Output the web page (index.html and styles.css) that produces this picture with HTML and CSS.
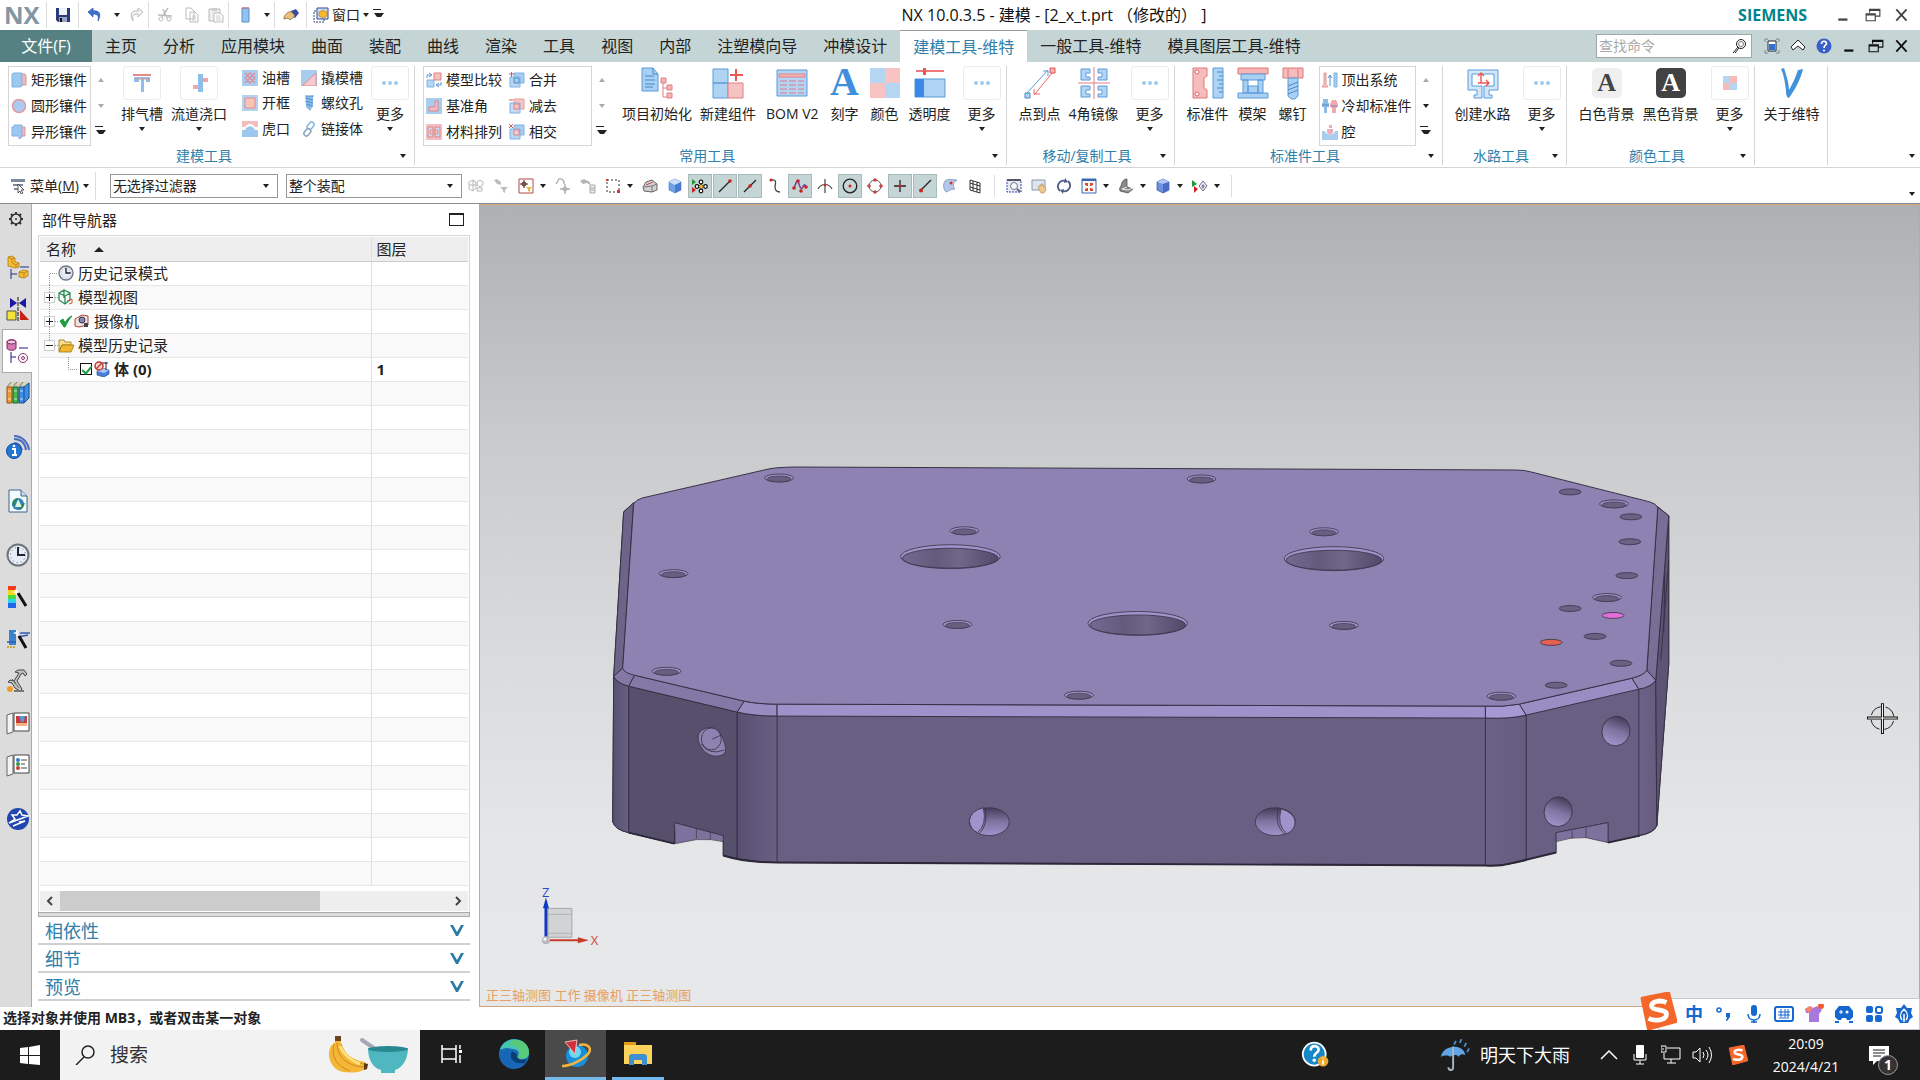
FILE: index.html
```
<!DOCTYPE html>
<html lang="zh-CN">
<head>
	<title>NX 10.0.3.5 - 建模</title>
	<meta charset="UTF-8">
	<link rel="stylesheet" href="styles.css">
</head>
<body>
	<svg class="sprite">
		<symbol id="i-save" viewBox="0 0 16 16"><path d="M1 1h14v14H3l-2-2z" fill="#2b3a78"/><path d="M4 1h8v7H4z" fill="#eef1fb"/><path d="M4 10h8v5H4z" fill="#9aa4c8"/><path d="M5 11h2v4H5z" fill="#111"/></symbol>
		<symbol id="i-undo" viewBox="0 0 16 16"><path d="M1 5l5-4v3c6-1 9 3 5 10 1-5 0-7-5-7v3z" fill="#3f74cf" stroke="#2753a5" stroke-width=".7"/></symbol>
		<symbol id="i-redo" viewBox="0 0 16 16"><path d="M15 5l-5-4v3c-6-1-9 3-5 10-1-5 0-7 5-7v3z" fill="#f2f2f2" stroke="#bbb"/></symbol>
		<symbol id="i-cut" viewBox="0 0 16 16"><path d="M5 10l6-9M10 11L6 2M1 8l14 1" fill="none" stroke="#bcbcbc" stroke-width="1.4"/><circle cx="4" cy="12" r="2" fill="none" stroke="#bcbcbc"/><circle cx="12" cy="12" r="2" fill="none" stroke="#bcbcbc"/></symbol>
		<symbol id="i-copy" viewBox="0 0 16 16"><path d="M2 1h5l3 3v8H2zM6 5h5l3 3v7H6z" fill="#fff" stroke="#bbb"/><path d="M8 9h4M8 11h4M8 13h4" stroke="#ccc"/></symbol>
		<symbol id="i-paste" viewBox="0 0 16 16"><path d="M1 2h11v12H1z" fill="#eee" stroke="#bbb"/><path d="M4 1h5v3H4z" fill="#ccc"/><path d="M6 6h6l3 3v6H6z" fill="#fff" stroke="#bbb"/><path d="M8 9h4M8 11h5M8 13h5" stroke="#ccc"/></symbol>
		<symbol id="i-rect" viewBox="0 0 16 16"><path d="M5 1h7v14H5z" fill="#8cc4f5" stroke="#5c8dbd"/><path d="M5 1h7" stroke="#d66"/></symbol>
		<symbol id="i-hand" viewBox="0 0 16 16"><path d="M8 4l5-2 3 4-4 5-4-2z" fill="#3b4aa5"/><path d="M1 10c2-4 5-6 8-5l3 4-5 4-2-2-4 1z" fill="#e9bf7c" stroke="#7a5a2c" stroke-width=".7"/></symbol>
		<symbol id="i-window" viewBox="0 0 16 16"><path d="M1 4h10v11H1z" fill="#fff" stroke="#334a8d" stroke-dasharray="2 1"/><path d="M4 1h11v11H4z" fill="#cfe0fa" stroke="#334a8d"/><path d="M6 5l4-2 4 2v4l-4 2-4-2z" fill="#f7b92d" stroke="#b17a10" stroke-width=".6"/></symbol>
		<symbol id="i-min" viewBox="0 0 14 14"><path d="M2 11h8" stroke="currentColor" stroke-width="2"/></symbol>
		<symbol id="i-restore" viewBox="0 0 14 14"><path d="M1 6h8v6H1zM4 5V2h9v6H9M1 7h8M4 3h9" fill="none" stroke="currentColor" stroke-width="1"/></symbol>
		<symbol id="i-close" viewBox="0 0 14 14"><path d="M2 2l9 10M11 2L2 12" stroke="currentColor" stroke-width="1.600"/></symbol>
		<symbol id="i-find" viewBox="0 0 16 16"><circle cx="10" cy="6" r="4.5" fill="none" stroke="#222"/><circle cx="10" cy="6" r="2.5" fill="none" stroke="#777"/><path d="M7 9l-5 6M8 10l-4 5" stroke="#222"/></symbol>
		<symbol id="i-full" viewBox="0 0 16 16"><path d="M1 4V1h3M12 1h3v3M15 12v3h-3M4 15H1v-3" fill="none" stroke="#789"/><path d="M4 3h8v10H4z" fill="#fff" stroke="#223"/><path d="M5 6h6v6H5z" fill="#2f6fd0"/></symbol>
		<symbol id="i-up2" viewBox="0 0 16 16"><path d="M1 9l7-7 7 7-2 3-5-4-5 4z" fill="#fff" stroke="#222"/></symbol>
		<symbol id="i-help" viewBox="0 0 16 16"><circle cx="8" cy="8" r="7.5" fill="#3a5fc8"/><path d="M5.5 6c0-4 5-3 5-.5C10.500 7.500 8 7 8 10" fill="none" stroke="#fff" stroke-width="1.6"/><circle cx="8" cy="12.400" r="1" fill="#fff"/></symbol>

		<!-- ribbon, small -->
		<symbol id="r-box" viewBox="0 0 16 16"><path d="M10 2h4l1 2v9h-5z" fill="#f5b9b9" stroke="#e39090"/><path d="M1 2l2-1h8v13l-2 1H1z" fill="#9cc8f0" stroke="#7eb3e4"/></symbol>
		<symbol id="r-round" viewBox="0 0 16 16"><circle cx="8" cy="8" r="6.500" fill="#a9cbf0" stroke="#e79a9a" stroke-width="1.500"/></symbol>
		<symbol id="r-odd" viewBox="0 0 16 16"><path d="M10 3h4v9h-4z" fill="#f5b9b9" stroke="#e39090"/><path d="M1 3h2V1h8v12l-3 2V12H1z" fill="#9cc8f0" stroke="#7eb3e4"/></symbol>
		<symbol id="r-oil" viewBox="0 0 16 16"><path d="M0 0h16v16H0z" fill="#a9cdee"/><path d="M3 3l5 5 5-5M3 8l5 5 5-5M3 8l5-5 5 5M3 13l5-5 5 5" fill="none" stroke="#dd8e9c" stroke-width="1.400"/></symbol>
		<symbol id="r-frame" viewBox="0 0 16 16"><path d="M0 0h16v16H0z" fill="#b4d3f0"/><path d="M3 3h10v10H3z" fill="#f6c5ba" stroke="#e38b8b"/></symbol>
		<symbol id="r-tiger" viewBox="0 0 16 16"><path d="M0 9h3c2-5 8-5 10 0h3v7H0z" fill="#9cc8f0"/><path d="M0 0h16v6h-3c-3-4-7-4-10 0H0z" fill="#f4bdbd"/></symbol>
		<symbol id="r-pry" viewBox="0 0 16 16"><path d="M0 0h16v16H0z" fill="#a9cdee"/><path d="M1 16L15 3v13z" fill="#f3cbd0" stroke="#e38b8b"/></symbol>
		<symbol id="r-thread" viewBox="0 0 16 16"><path d="M5 1h7v10l-3 5-4-4z" fill="#8dbbe8"/><path d="M4 3l8 2M4 6l8 2M5 9l7 2M4 1h9" stroke="#4f8fd0"/></symbol>
		<symbol id="r-link" viewBox="0 0 16 16"><rect x="7" y="1" width="5" height="8" rx="2.500" transform="rotate(40 10 5)" fill="none" stroke="#8db8e4" stroke-width="1.600"/><rect x="4" y="7" width="5" height="8" rx="2.500" transform="rotate(40 6 11)" fill="none" stroke="#8ea6c0" stroke-width="1.600"/></symbol>
		<symbol id="r-compare" viewBox="0 0 16 16"><path d="M8 1h7v7H8z" fill="#f4c0c0" stroke="#df8585"/><path d="M1 8h7v7H1z" fill="#b5d5f2" stroke="#7eb3e4"/><path d="M1 6V3h4M3 1l3 2-3 2M15 10v3h-4M13 15l-3-2 3-2" fill="none" stroke="#5d96d3"/></symbol>
		<symbol id="r-corner" viewBox="0 0 16 16"><path d="M0 0h16v16H0z" fill="#a9cdee"/><path d="M9 3h3v10H3V9h6z" fill="#f3bcc8" stroke="#df8585"/></symbol>
		<symbol id="r-mat" viewBox="0 0 16 16"><path d="M0 0h16v16H0z" fill="#f2bfc4"/><path d="M2 3h5v10H2zM9 3h5v10H9z" fill="#c9dcf2" stroke="#df8585"/><path d="M4 6h3v4H4zM9 6h3v4H9z" fill="#f2bfc4" stroke="#df8585" stroke-width=".7"/></symbol>
		<symbol id="r-unite" viewBox="0 0 16 16"><path d="M5 1h10v10H5z" fill="#a9cdee" stroke="#7eb3e4"/><path d="M1 5h10v10H1z" fill="#a9cdee" fill-opacity=".8" stroke="#7eb3e4"/><path d="M5 6h5v5H5z" fill="none" stroke="#4f8fd0"/><path d="M0 2h5M2.500 0v5" stroke="#d55"/></symbol>
		<symbol id="r-sub" viewBox="0 0 16 16"><path d="M5 1h10v10H5z" fill="#f5c4c4" stroke="#e79a9a"/><path d="M1 5h10v10H1z" fill="#b5d3f0" fill-opacity=".8" stroke="#7eb3e4"/><path d="M5 6h5v5H5z" fill="#f5c4c4" stroke="#df8585"/><path d="M0 2h4" stroke="#d55"/></symbol>
		<symbol id="r-and" viewBox="0 0 16 16"><path d="M5 1h10v10H5z" fill="#a9cdee" stroke="#7eb3e4"/><path d="M1 5h10v10H1z" fill="#a9cdee" fill-opacity=".8" stroke="#7eb3e4"/><path d="M5 6h5v5H5z" fill="#f3d0d8" stroke="#df8585"/><path d="M0 0l4 4M4 0L0 4" stroke="#d55"/></symbol>
		<symbol id="r-eject" viewBox="0 0 16 16"><path d="M2 1v11l-2 3h6l-2-3V1z" fill="#f5c4c4" stroke="#e08989" stroke-width=".8"/><path d="M8 14V4M6 6l2-3 2 3" fill="none" stroke="#4f8fd0"/><path d="M12 1h3v14h-3z" fill="#a9cdee" stroke="#7eb3e4"/></symbol>
		<symbol id="r-cool" viewBox="0 0 16 16"><path d="M1 1h5v4h1v4H5v6H2V9H0V5h1z" fill="#8cbbe8"/><path d="M10 2h4l2 4v3l-2 1v5h-4v-5L8 9V6z" fill="#f1a9a9"/><path d="M0 7h7M9 8h6" stroke="#5a8dc8"/></symbol>
		<symbol id="r-cavity" viewBox="0 0 16 16"><path d="M0 7h3c1 5 9 5 10 0h3v9H0z" fill="#a9cdee"/><path d="M5 5h6v4l-3 2-3-2zM7 1h3v3H7z" fill="#e9aeb6"/></symbol>

		<!-- ribbon, large -->
		<symbol id="b-vent" viewBox="0 0 32 32"><path d="M7 8h18" stroke="#e58a8a" stroke-width="2"/><path d="M8 10v5h5v-3h2v13h3V12h2v3h4v-5z" fill="#8fbfe9"/><path d="M9 12h15" stroke="#d99"/></symbol>
		<symbol id="b-gate" viewBox="0 0 32 32"><path d="M15 7h5v18h-5z" fill="#8fbfe9"/><path d="M20 11h5v4h-5zM10 18h5v4h-5z" fill="#f0a7a7"/></symbol>
		<symbol id="b-more" viewBox="0 0 32 32"><circle cx="10" cy="16" r="2" fill="#9ccbee"/><circle cx="16" cy="16" r="2" fill="#9ccbee"/><circle cx="22" cy="16" r="2" fill="#9ccbee"/></symbol>
		<symbol id="b-init" viewBox="0 0 32 32"><path d="M1 1h11l5 6v17H1z" fill="#a9cff3" stroke="#5b9bd8"/><path d="M12 1v6h5M4 9h9M4 13h10M4 17h10M4 20h8" fill="none" stroke="#4388cc"/><path d="M22 16v14h4M22 21h4" fill="none" stroke="#e08080"/><path d="M20 11h5v5h-5zM26 18h5v5h-5zM26 26h5v5h-5z" fill="#f5b5b5" stroke="#e08080"/></symbol>
		<symbol id="b-new" viewBox="0 0 32 32"><path d="M1 2h15v14H1zM1 16h15v15H1z" fill="#aed3f3" stroke="#5b9bd8"/><path d="M16 16h15v15H16z" fill="#f6c3c3" stroke="#e08080"/><path d="M24 2v12M18 8h13" stroke="#e55" stroke-width="2"/></symbol>
		<symbol id="b-bom" viewBox="0 0 32 32"><path d="M1 3h30v26H1z" fill="#b4d4f3" stroke="#5b9bd8"/><path d="M3 7h26v3H3z" fill="#f6b5b5" stroke="#e08080"/><path d="M4 14h24M4 18h24M4 22h24M4 26h24" stroke="#d87a8a" stroke-dasharray="7 2"/></symbol>
		<symbol id="b-colors" viewBox="0 0 32 32"><path d="M1 1h30v30H1z" fill="#b5d6f2"/><path d="M16 1h15v15H16zM1 16h15v15H1z" fill="#f7c3c3"/></symbol>
		<symbol id="b-alpha" viewBox="0 0 32 32"><path d="M2 4h28" stroke="#e77" stroke-width="2"/><path d="M9 1h3v7H9z" fill="#e55"/><path d="M1 12h30v18H1z" fill="#aed3f3" stroke="#5b9bd8"/><path d="M1 12h9v18H1z" fill="#3988ea"/></symbol>
		<symbol id="b-p2p" viewBox="0 0 32 32"><path d="M3 26L24 3M19 4h5v5" fill="none" stroke="#5b9bd8"/><path d="M29 5L10 28M16 27h-6v-5" fill="none" stroke="#e66"/><path d="M1 26h5v5H1z" fill="#b4d4f3" stroke="#4388cc"/><path d="M26 1h5v5h-5z" fill="#f6b5b5" stroke="#d55"/></symbol>
		<symbol id="b-mirror" viewBox="0 0 32 32"><path d="M3 2h9v4H8v4h4v3H3zM29 2h-9v4h4v4h-4v3h9zM3 19h9v4H8v4h4v3H3zM29 19h-9v4h4v4h-4v3h9z" fill="#b4d4f3" stroke="#5b9bd8"/><path d="M16 0v32M0 16h32" stroke="#e08080"/></symbol>
		<symbol id="b-std" viewBox="0 0 32 32"><path d="M1 1h14v8l-3 2v10l3 2v8H1z" fill="#f6bcbc" stroke="#dd7777"/><circle cx="5" cy="5" r="2" fill="#fff" stroke="#d66"/><circle cx="5" cy="27" r="2" fill="#fff" stroke="#d66"/><path d="M21 1h10v30H21z" fill="#aed3f3" stroke="#5b9bd8"/><path d="M31 5h-6M31 9h-4M31 13h-6M31 17h-4M31 21h-6M31 25h-4" stroke="#4388cc"/></symbol>
		<symbol id="b-base" viewBox="0 0 32 32"><path d="M1 1h30v6H1z" fill="#f6b5b5" stroke="#dd7777"/><path d="M4 7h24v6H4zM6 13h5v13H6zM21 13h5v13h-5zM11 19h10v7H11zM1 26h30v5H1z" fill="#a9cff3" stroke="#5b9bd8"/></symbol>
		<symbol id="b-bolt" viewBox="0 0 32 32"><path d="M6 1h20v10H6z" fill="#f6bcbc" stroke="#dd7777"/><path d="M11 2v8M21 2v8" stroke="#dd7777"/><path d="M11 11h10v18l-3 3h-4l-3-3z" fill="#a9cff3" stroke="#5b9bd8"/><path d="M11 19l10-4M11 23l10-4M11 27l10-4" stroke="#4388cc"/></symbol>
		<symbol id="b-water" viewBox="0 0 32 32"><path d="M1 3h30v20h-9v5h3v3h-8V19h10V7H5v12h10v12H7v-3h3v-5H1z" fill="#d3e7f8" stroke="#5b9bd8"/><path d="M14 16V6M11 9l3-3 3 3M11 16h11M19 13l3 3-3 3" fill="none" stroke="#e55" stroke-width="1.400"/></symbol>
		<symbol id="b-mini" viewBox="0 0 32 32"><path d="M9 9h14v14H9z" fill="#b5d6f2"/><path d="M16 9h7v7h-7zM9 16h7v7H9z" fill="#f7b9b9"/></symbol>
		<symbol id="b-about" viewBox="0 0 32 32"><path d="M5 2l3-1c3 10 5 16 5 22C17 16 20 9 22 3l5-1c-2 9-8 21-14 29-2 0-3-3-3-7C9 16 8 8 5 2z" fill="#4192da"/></symbol>

		<!-- selection toolbar -->
		<symbol id="t-menu" viewBox="0 0 16 16"><path d="M1 1h14v3H1zM3 6h10v2H3zM4 10h6v2H4z" fill="#7b8a9c"/><path d="M8 6l6 6h-3l2 3-2 1-1-3-2 2z" fill="#fff" stroke="#333" stroke-width=".8"/></symbol>
		<symbol id="t-asm" viewBox="0 0 16 16"><path d="M1 4l4-2 3 2v6l-3 3-4-2zM5 2v11M1 7h7M9 4l3-2 3 2v3l-3 2-3-2zM9 10h5v3H9z" fill="none" stroke="#b6b6b6"/></symbol>
		<symbol id="t-funnel" viewBox="0 0 16 16"><path d="M1 2l3-1 4 3v3L4 6zM7 9h8l-3 3v3l-2-1v-2z" fill="#bdbdbd"/></symbol>
		<symbol id="t-point" viewBox="0 0 16 16"><path d="M1 1h14v14H1z" fill="#fff" stroke="#b14a4a"/><path d="M6 2v8M2 6h8" stroke="#522"/><circle cx="6" cy="6" r="2" fill="none" stroke="#522"/><path d="M8 9h6l-2 2v3l-2-1v-2z" fill="#e5b63c"/></symbol>
		<symbol id="t-step" viewBox="0 0 16 16"><path d="M1 6l3-5c5-1 5 3 5 5M5 11h10M10 6v10" fill="none" stroke="#aaa" stroke-width="1.300"/><circle cx="10" cy="11" r="2" fill="none" stroke="#aaa"/></symbol>
		<symbol id="t-list" viewBox="0 0 16 16"><path d="M0 3l4-2 6 3v3L7 5 3 6z" fill="#b5b5b5"/><path d="M10 7h5v8h-5zM10 10h5M10 12h5" fill="#eee" stroke="#aaa"/></symbol>
		<symbol id="t-rect" viewBox="0 0 16 16"><path d="M2 2h12v12H2z" fill="none" stroke="#333" stroke-dasharray="2 2"/><path d="M12 12h3v3h-3zM1 1h2v2H1z" fill="#d33"/></symbol>
		<symbol id="t-face" viewBox="0 0 16 16"><path d="M1 9l3-5 6-2 5 4v6l-5 2-8-1z" fill="#d2d2d2" stroke="#666"/><path d="M10 14V8l5-2M10 8L2 9" fill="none" stroke="#777"/><path d="M4 7l7-3" stroke="#c44"/></symbol>
		<symbol id="t-cube" viewBox="0 0 16 16"><path d="M2 4l6-3 6 3v8l-6 3-6-3z" fill="#6fa3e8" stroke="#4674bd" stroke-width=".6"/><path d="M2 4l6 3 6-3-6-3z" fill="#cfe1fa"/><path d="M8 7v8l6-3V4z" fill="#4a7bd0"/></symbol>
		<symbol id="t-snap" viewBox="0 0 16 16"><path d="M0 1l4 3-4 3z" fill="#1b9a34"/><path d="M0 9l4 3-4 3z" fill="#c22"/><g fill="#fff" stroke="#111" stroke-width="1.200"><circle cx="9" cy="4" r="1.800"/><circle cx="9" cy="13" r="1.800"/><circle cx="5" cy="8.500" r="1.800"/><circle cx="13.500" cy="8.500" r="1.800"/></g><path d="M9 6l3 2.500L9 11 6.500 8.500z" fill="#e8b92a" stroke="#111" stroke-width=".6"/></symbol>
		<symbol id="t-end" viewBox="0 0 16 16"><path d="M2 14L13 3" stroke="#222" stroke-width="1.300"/><circle cx="13" cy="3" r="1.800" fill="#c22"/></symbol>
		<symbol id="t-mid" viewBox="0 0 16 16"><path d="M2 14L14 2" stroke="#222" stroke-width="1.300"/><circle cx="8" cy="8" r="1.800" fill="#c22"/></symbol>
		<symbol id="t-curve" viewBox="0 0 16 16"><path d="M3 13L14 2" stroke="#222" stroke-width="1.300"/><circle cx="4" cy="12.500" r="2" fill="#c22"/></symbol>
		<symbol id="t-ctrl" viewBox="0 0 16 16"><path d="M4 2c7-1 4 4 4 7s2 5 5 5" fill="none" stroke="#444" stroke-width="1.300"/><circle cx="4" cy="2" r="1.500" fill="#c22"/></symbol>
		<symbol id="t-poly" viewBox="0 0 16 16"><path d="M2 11C5 0 6 2 7 6s3 6 4 3 2-3 3 0" fill="none" stroke="#3c3cae" stroke-width="1.300"/><path d="M2 10l4-7 3 10 2-6 3 3" fill="none" stroke="#c55" stroke-width=".6"/><circle cx="2" cy="10" r="1.800" fill="#c22"/><circle cx="6" cy="3" r="1.800" fill="#c22"/><circle cx="9" cy="13" r="1.800" fill="#c22"/><circle cx="14" cy="9" r="1.800" fill="#c22"/></symbol>
		<symbol id="t-cross" viewBox="0 0 16 16"><path d="M8 1v14M1 11C4 5 12 5 15 11" fill="none" stroke="#444" stroke-width="1.200"/><circle cx="8" cy="7" r="1.300" fill="#c22"/></symbol>
		<symbol id="t-center" viewBox="0 0 16 16"><circle cx="8" cy="8" r="6.800" fill="none" stroke="#222" stroke-width="1.300"/><circle cx="8" cy="8" r="1.500" fill="#c22"/></symbol>
		<symbol id="t-quad" viewBox="0 0 16 16"><circle cx="8" cy="8" r="6" fill="none" stroke="#555"/><g fill="#c44"><circle cx="8" cy="2" r="1.800"/><circle cx="8" cy="14" r="1.800"/><circle cx="2" cy="8" r="1.800"/><circle cx="14" cy="8" r="1.800"/></g></symbol>
		<symbol id="t-plus" viewBox="0 0 16 16"><path d="M8 2v12M2 8h12" stroke="#222" stroke-width="1.300"/><circle cx="8" cy="8" r="1.500" fill="#c22"/></symbol>
		<symbol id="t-surf" viewBox="0 0 16 16"><path d="M3 3c4-3 8-1 12-1-5 3-4 7-2 9-5 0-7 3-9 3-3-3-3-8-1-11z" fill="#b5c8ea" stroke="#7288b5" stroke-width=".7"/><circle cx="9" cy="5" r="1.500" fill="#c33"/></symbol>
		<symbol id="t-grid" viewBox="0 0 16 16"><path d="M3 2l10 3v10L3 12zM3 5l10 3M3 9l10 3M6 3v10M10 4v10" fill="none" stroke="#333"/></symbol>
		<symbol id="t-fit" viewBox="0 0 16 16"><path d="M1 2h14v12H1z" fill="#e6ecf5" stroke="#2f41c5" stroke-dasharray="2 1"/><path d="M1 2h14" stroke="#556" stroke-width="2"/><circle cx="8" cy="8" r="3.500" fill="#f6faff" stroke="#777"/><path d="M11 11l3 3" stroke="#666" stroke-width="2"/></symbol>
		<symbol id="t-pan" viewBox="0 0 16 16"><path d="M1 2h13v10H1z" fill="#dde5f0" stroke="#8a96aa"/><path d="M7 9l2-2 1 1V6h2v2l2 1 1 3-2 3h-3z" fill="#edc98e" stroke="#a98750" stroke-width=".6"/></symbol>
		<symbol id="t-rot" viewBox="0 0 16 16"><path d="M4 13C-1 8 4 1 10 3M12 3c5 5 0 12-6 10" fill="none" stroke="#4c5c85" stroke-width="1.800"/><path d="M9 0l3 4-4 1zM7 16l-3-4 4-1z" fill="#4c5c85"/></symbol>
		<symbol id="t-layout" viewBox="0 0 16 16"><path d="M1 1h14v14H1z" fill="#f7f9fd" stroke="#3e66b5"/><path d="M1 2h14" stroke="#3e66b5" stroke-width="2"/><path d="M4 5h3v3H6L4 7zM12 5H9v3h1l2-1zM4 13h3v-3H6l-2 1zM12 13H9v-3h1l2 1z" fill="#d64a2a"/></symbol>
		<symbol id="t-clip" viewBox="0 0 16 16"><path d="M3 8c1-5 3-7 6-7v8l6 2-5 4-8-2c-1-2 0-4 1-5z" fill="#8a8a8a" stroke="#444" stroke-width=".7"/><path d="M4 11l6 1 5-2M9 9l-5 2" fill="none" stroke="#eee"/></symbol>
		<symbol id="t-shade" viewBox="0 0 16 16"><path d="M2 4l6-3 6 3v8l-6 3-6-3z" fill="#6f8fe0" stroke="#3552a5" stroke-width=".7"/><path d="M2 4l6 2 6-2-6-3z" fill="#b3c5f7"/><path d="M8 6v9l6-3V4z" fill="#4c6bc6"/></symbol>
		<symbol id="t-view" viewBox="0 0 16 16"><path d="M0 2l5 4-5 3z" fill="#1b9a34"/><path d="M2 8l4 3-4 4z" fill="#c22"/><path d="M7 8l4-5 4 5-4 5z" fill="#f2f2f8" stroke="#668"/><path d="M9 8l2-2 2 2-2 3z" fill="#88a"/></symbol>

		<!-- resource bar -->
		<symbol id="s-gear" viewBox="0 0 24 24"><circle cx="12" cy="12" r="5" fill="none" stroke="#333" stroke-width="1.500"/><circle cx="12" cy="12" r="1" fill="#333"/><path d="M12 5v2M12 17v2M5 12h2M17 12h2M7 7l2 2M15 15l2 2M7 17l2-2M15 9l2-2" stroke="#333" stroke-width="2"/></symbol>
		<symbol id="s-asm" viewBox="0 0 24 24"><path d="M2 2l4-1 3 2v4l4 1v4l-4 1-7-2z" fill="#f3bc31" stroke="#a87412" stroke-width=".7"/><path d="M2 2l4 2v4l4 2M9 3L6 4M13 8l-3 2v3" fill="none" stroke="#a87412" stroke-width=".7"/><path d="M13 17l4-2 5 1v5l-4 2-5-1z" fill="#f3bc31" stroke="#a87412" stroke-width=".7"/><path d="M13 17l5 1 4-2M18 18v5" fill="none" stroke="#a87412" stroke-width=".7"/><path d="M5 14v10M5 19h6M14 12h9" stroke="#1b2f85"/></symbol>
		<symbol id="s-con" viewBox="0 0 24 24"><path d="M4 1l7 5-7 5zM20 1l-7 5 7 5z" fill="#1818a5"/><path d="M12 0v24" stroke="#111" stroke-dasharray="4 1"/><path d="M1 14h9v9H1z" fill="#f5e33c" stroke="#554"/><path d="M14 13l9 10h-9z" fill="#c72214"/></symbol>
		<symbol id="s-part" viewBox="0 0 24 24"><path d="M1 3c0-3 9-3 9 0v6c0 3-9 3-9 0z" fill="#d77ab4" stroke="#7c2361"/><ellipse cx="5.500" cy="3" rx="4.500" ry="2" fill="#f2cbe2" stroke="#7c2361"/><path d="M5 13v11M5 18h5M13 9h9" stroke="#1b1b85"/><circle cx="17" cy="19" r="4.500" fill="#fff" stroke="#8d2b70"/><circle cx="17" cy="19" r="1.500" fill="none" stroke="#8d2b70"/></symbol>
		<symbol id="s-books" viewBox="0 0 24 24"><path d="M1 6l5-5h17l1 1v15l-6 5H1z" fill="#d8d2b8"/><path d="M1 6h5v16H1z" fill="#f09a34" stroke="#9c4e0d"/><path d="M7 6h5v16H7z" fill="#43b84c" stroke="#16671c"/><path d="M13 6h5l5-4v15l-5 5h-5z" fill="#3d8ee6" stroke="#174d90"/><path d="M18 6v16" stroke="#174d90"/><path d="M1 6l4-5M7 6l4-5M13 6l4-5" stroke="#776"/><path d="M2 10h3M2 18h3M8 10h3M8 18h3M14 10h3M14 18h3" stroke="#fff" stroke-opacity=".7"/></symbol>
		<symbol id="s-info" viewBox="0 0 24 24"><path d="M8 1c8 0 14 6 15 14M8 4c7 0 11 4 12 11M8 8c5 0 7 3 8 7" fill="none" stroke="#4a6bbd" stroke-width="2"/><circle cx="8" cy="16" r="7.500" fill="#2277d4" stroke="#124f9c"/><path d="M6 14h3v6M6 20h5" fill="none" stroke="#fff" stroke-width="2"/><circle cx="8" cy="11" r="1.300" fill="#fff"/></symbol>
		<symbol id="s-web" viewBox="0 0 24 24"><path d="M3 1h12l6 6v16H3z" fill="#f4fafd" stroke="#39648f"/><path d="M15 1v6h6" fill="#cde" stroke="#39648f"/><circle cx="12" cy="15" r="6" fill="#2d83bd"/><path d="M12 10l4 8h-7z" fill="#dff3df"/><path d="M7 17c1-6 3-7 5-7M13 20c3 0 4-3 5-6" stroke="#2c8a48" stroke-width="2" fill="none"/></symbol>
		<symbol id="s-clock" viewBox="0 0 24 24"><circle cx="12" cy="12" r="10.500" fill="#e6edf7" stroke="#70747c" stroke-width="2"/><path d="M12 4v8h7" fill="none" stroke="#223" stroke-width="2"/><circle cx="12" cy="12" r="7.500" fill="none" stroke="#667" stroke-dasharray="1 3"/></symbol>
		<symbol id="s-role" viewBox="0 0 24 24"><path d="M2 1h8v5H2z" fill="#ee3b1c"/><path d="M2 5h8v5H2z" fill="#f7d51d"/><path d="M2 10h8v5H2z" fill="#47dd3d"/><path d="M2 14h8v5H2z" fill="#2cd6e8"/><path d="M2 18h8v5H2z" fill="#2266ee"/><path d="M12 8l8 13" stroke="#111" stroke-width="3"/><path d="M10 3l1 3 3 1-3 1-1 3-1-3-3-1 3-1z" fill="#fff"/></symbol>
		<symbol id="s-wiz" viewBox="0 0 24 24"><path d="M3 3h7v15H3z" fill="#3b82cb"/><path d="M1 15h9M10 6h14M12 10l10-2" stroke="#3559b5" stroke-width="1.500"/><path d="M13 9l7 12" stroke="#111" stroke-width="3"/><path d="M1 20h9" stroke="#c7a43c" stroke-width="2" stroke-dasharray="2 1"/><path d="M11 2l1 3 3 1-3 1-1 3-1-3-3-1 3-1z" fill="#fff"/></symbol>
		<symbol id="s-robot" viewBox="0 0 24 24"><path d="M9 3l3-2h6l3 4-2 2-2-3-2 1-4 7 5 8-2 2-5-3-3-5-4-1 2-2 4 1 5-8z" fill="#c2c2c2" stroke="#444"/><path d="M8 13l5 6M6 10l4 4" stroke="#666"/><circle cx="4" cy="20" r="3" fill="#ee9b2a"/><path d="M8 22h10" stroke="#777" stroke-width="2"/></symbol>
		<symbol id="s-card" viewBox="0 0 24 24"><path d="M1 4l6-2v19l-6 2z" fill="#f4f4f4" stroke="#666"/><path d="M8 2h15v18H8z" fill="#fff" stroke="#444"/><path d="M10 5h11v7H10z" fill="#c93a34"/><path d="M13 5h6l-1 6h-3z" fill="#5a93e0"/><path d="M10 12h11v3H10z" fill="#f3b184"/></symbol>
		<symbol id="s-cards" viewBox="0 0 24 24"><path d="M1 4l6-2v19l-6 2z" fill="#f4f4f4" stroke="#666"/><path d="M8 2h15v18H8z" fill="#fff" stroke="#444"/><circle cx="12" cy="7" r="2" fill="#3377d8"/><circle cx="12" cy="11" r="2" fill="#2f9a44"/><circle cx="12" cy="15" r="2" fill="#cb3a34"/><path d="M15 7h6M15 11h4M15 15h6" stroke="#444"/></symbol>
		<symbol id="s-star" viewBox="0 0 24 24"><circle cx="12" cy="12" r="11" fill="#1f47ad"/><path d="M3 16l6-4-3-4h5l3-4 2 4 6 1-8 3zM7 19l12-5-6 1" fill="none" stroke="#fff" stroke-width="1.500"/></symbol>

		<!-- tree -->
		<symbol id="n-view" viewBox="0 0 16 16"><path d="M1 4l5-3 6 3v7l-5 4-6-4zM1 4l6 3 5-3M7 7v8M6 1v8" fill="none" stroke="#2b8a57" stroke-width="1.300"/><path d="M9 12l5-2v4l-3 1" fill="none" stroke="#d2522a"/></symbol>
		<symbol id="n-tick" viewBox="0 0 16 16"><path d="M2 8l3-2 2 4c2-4 4-6 7-7-3 3-5 7-7 11H6z" fill="#1e9b3f" stroke="#1e9b3f"/></symbol>
		<symbol id="n-cam" viewBox="0 0 16 16"><path d="M1 6l7-4 6 1v9l-9 2-4-1z" fill="#f1e4e4" stroke="#b33d34"/><circle cx="8" cy="7" r="3" fill="#88a" stroke="#335"/><path d="M10 10h4v4h-4z" fill="#444"/></symbol>
		<symbol id="n-folder" viewBox="0 0 16 16"><path d="M1 3h5l1 2h6v3H4l-3 6z" fill="#fbe08a" stroke="#9c7412" stroke-width=".8"/><path d="M4 8h12l-3 7H1z" fill="#f3b62d" stroke="#9c7412" stroke-width=".8"/></symbol>
		<symbol id="n-body" viewBox="0 0 16 16"><path d="M3 10l5-3 7 2v4l-5 3-7-2z" fill="#4a80dc" stroke="#224a97" stroke-width=".7"/><path d="M3 10l7 2 5-3-7-2z" fill="#a9c6f5"/><path d="M7 2h7M12 1v8" stroke="#223"/><circle cx="5" cy="5" r="4" fill="#f6dada" stroke="#c4362f" stroke-width="1.500"/><path d="M2 8l6-6" stroke="#c4362f" stroke-width="1.500"/></symbol>
		<symbol id="n-down" viewBox="0 0 16 16"><path d="M1 2h3l4 7 4-7h3L9 13H7z" fill="#2d7ca6"/></symbol>

		<!-- desktop taskbar -->
		<symbol id="w-s" viewBox="0 0 36 36"><path d="M3 6L28 1l7 27-26 7z" fill="#f4662a" stroke="#f4662a" stroke-width="3" stroke-linejoin="round"/><path d="M26 10c-6-3-15-1-14 4 1 4 14 2 14 7 0 6-11 7-17 4" fill="none" stroke="#fff" stroke-width="4.500"/></symbol>
		<symbol id="w-umbrella" viewBox="0 0 32 36"><path d="M1 20C3 7 25 5 27 18c-4-2-6 0-7 2-2-3-7-2-9 0-2-2-7-2-10 0z" fill="#5fa4e4"/><path d="M14 9v22c0 4-5 4-5 0" fill="none" stroke="#a9b8c6" stroke-width="2"/><path d="M17 3l-2 4M23 1l-2 4M28 5l-2 4M31 11l-2 4" stroke="#4a8ccc" stroke-width="2"/></symbol>
	</svg>

	<header class="titlebar">
		<strong class="nx">NX</strong>
		<nav class="quick">
			<button class="sep"><svg><use href="#i-save"/></svg></button>
			<button class="sep"><svg><use href="#i-undo"/></svg></button>
			<button class="drop"><i class="caret"></i></button>
			<button><svg><use href="#i-redo"/></svg></button>
			<button class="sep"><svg><use href="#i-cut"/></svg></button>
			<button><svg><use href="#i-copy"/></svg></button>
			<button><svg><use href="#i-paste"/></svg></button>
			<button class="sep"><svg><use href="#i-rect"/></svg></button>
			<button class="drop"><i class="caret"></i></button>
			<button class="sep"><svg><use href="#i-hand"/></svg></button>
			<button class="sep"><svg><use href="#i-window"/></svg>窗口<i class="caret"></i></button>
			<button class="drop"><i class="caret bar"></i></button>
		</nav>
		<h1>NX 10.0.3.5 - 建模 - [2_x_t.prt （修改的） ]</h1>
		<div class="win">
			<b class="brand">SIEMENS</b>
			<button><svg><use href="#i-min"/></svg></button>
			<button><svg><use href="#i-restore"/></svg></button>
			<button><svg><use href="#i-close"/></svg></button>
		</div>
	</header>

	<nav class="tabs">
		<button class="file">文件(F)</button>
		<button>主页</button>
		<button>分析</button>
		<button>应用模块</button>
		<button>曲面</button>
		<button>装配</button>
		<button>曲线</button>
		<button>渲染</button>
		<button>工具</button>
		<button>视图</button>
		<button>内部</button>
		<button>注塑模向导</button>
		<button>冲模设计</button>
		<button class="active">建模工具-维特</button>
		<button>一般工具-维特</button>
		<button>模具图层工具-维特</button>
		<div class="tab_tools">
			<label class="find"><input type="text" placeholder="查找命令" aria-label="查找命令"><svg><use href="#i-find"/></svg></label>
			<button><svg><use href="#i-full"/></svg></button>
			<button><svg><use href="#i-up2"/></svg></button>
			<button><svg><use href="#i-help"/></svg></button>
			<button><svg><use href="#i-min"/></svg></button>
			<button><svg><use href="#i-restore"/></svg></button>
			<button><svg><use href="#i-close"/></svg></button>
		</div>
	</nav>

	<section class="ribbon">
		<div class="group">
			<div class="tools">
				<div class="gallery one">
					<button><svg><use href="#r-box"/></svg>矩形镶件</button>
					<button><svg><use href="#r-round"/></svg>圆形镶件</button>
					<button><svg><use href="#r-odd"/></svg>异形镶件</button>
				</div>
				<div class="scroll"><button><i class="caret up off"></i></button><button><i class="caret off"></i></button><button><i class="caret bar"></i></button></div>
				<button class="big boxed"><svg><use href="#b-vent"/></svg>排气槽<i class="caret"></i></button>
				<button class="big boxed"><svg><use href="#b-gate"/></svg>流道浇口<i class="caret"></i></button>
				<div class="small">
					<button><svg><use href="#r-oil"/></svg>油槽</button>
					<button><svg><use href="#r-frame"/></svg>开框</button>
					<button><svg><use href="#r-tiger"/></svg>虎口</button>
				</div>
				<div class="small">
					<button><svg><use href="#r-pry"/></svg>撬模槽</button>
					<button><svg><use href="#r-thread"/></svg>螺纹孔</button>
					<button><svg><use href="#r-link"/></svg>链接体</button>
				</div>
				<button class="big boxed more"><svg><use href="#b-more"/></svg>更多<i class="caret"></i></button>
			</div>
			<footer><span>建模工具</span><button><i class="caret"></i></button></footer>
		</div>

		<div class="group">
			<div class="tools">
				<div class="gallery two">
					<button><svg><use href="#r-compare"/></svg>模型比较</button>
					<button><svg><use href="#r-unite"/></svg>合并</button>
					<button><svg><use href="#r-corner"/></svg>基准角</button>
					<button><svg><use href="#r-sub"/></svg>减去</button>
					<button><svg><use href="#r-mat"/></svg>材料排列</button>
					<button><svg><use href="#r-and"/></svg>相交</button>
				</div>
				<div class="scroll"><button><i class="caret up off"></i></button><button><i class="caret off"></i></button><button><i class="caret bar"></i></button></div>
				<button class="big"><svg><use href="#b-init"/></svg>项目初始化</button>
				<button class="big"><svg><use href="#b-new"/></svg>新建组件</button>
				<button class="big wide"><svg><use href="#b-bom"/></svg>BOM V2</button>
				<button class="big"><b class="letter">A</b>刻字</button>
				<button class="big"><svg><use href="#b-colors"/></svg>颜色</button>
				<button class="big"><svg><use href="#b-alpha"/></svg>透明度</button>
				<button class="big boxed more"><svg><use href="#b-more"/></svg>更多<i class="caret"></i></button>
			</div>
			<footer><span>常用工具</span><button><i class="caret"></i></button></footer>
		</div>

		<div class="group">
			<div class="tools">
				<button class="big"><svg><use href="#b-p2p"/></svg>点到点</button>
				<button class="big"><svg><use href="#b-mirror"/></svg>4角镜像</button>
				<button class="big boxed more"><svg><use href="#b-more"/></svg>更多<i class="caret"></i></button>
			</div>
			<footer><span>移动/复制工具</span><button><i class="caret"></i></button></footer>
		</div>

		<div class="group">
			<div class="tools">
				<button class="big"><svg><use href="#b-std"/></svg>标准件</button>
				<button class="big"><svg><use href="#b-base"/></svg>模架</button>
				<button class="big"><svg><use href="#b-bolt"/></svg>螺钉</button>
				<div class="gallery one after">
					<button><svg><use href="#r-eject"/></svg>顶出系统</button>
					<button><svg><use href="#r-cool"/></svg>冷却标准件</button>
					<button><svg><use href="#r-cavity"/></svg>腔</button>
				</div>
				<div class="scroll"><button><i class="caret up off"></i></button><button><i class="caret"></i></button><button><i class="caret bar"></i></button></div>
			</div>
			<footer><span>标准件工具</span><button><i class="caret"></i></button></footer>
		</div>

		<div class="group">
			<div class="tools">
				<button class="big"><svg><use href="#b-water"/></svg>创建水路</button>
				<button class="big boxed more"><svg><use href="#b-more"/></svg>更多<i class="caret"></i></button>
			</div>
			<footer><span>水路工具</span><button><i class="caret"></i></button></footer>
		</div>

		<div class="group">
			<div class="tools">
				<button class="big"><b class="letter light">A</b>白色背景</button>
				<button class="big"><b class="letter dark">A</b>黑色背景</button>
				<button class="big boxed more"><svg><use href="#b-mini"/></svg>更多<i class="caret"></i></button>
			</div>
			<footer><span>颜色工具</span><button><i class="caret"></i></button></footer>
		</div>

		<div class="group last">
			<div class="tools">
				<button class="big"><svg><use href="#b-about"/></svg>关于维特</button>
			</div>
		</div>
		<button class="launcher"><i class="caret"></i></button>
	</section>

	<section class="toolbar">
		<button class="menu"><svg><use href="#t-menu"/></svg><span>菜单(<u>M</u>)</span><i class="caret"></i></button>
		<span class="pick"><select aria-label="选择过滤器"><option>无选择过滤器</option></select><i class="caret"></i></span>
		<span class="pick"><select aria-label="选择范围"><option>整个装配</option></select><i class="caret"></i></span>
		<div class="icons">
			<button><svg><use href="#t-asm"/></svg></button>
			<button><svg><use href="#t-funnel"/></svg></button>
			<button><svg><use href="#t-point"/></svg></button><button class="drop"><i class="caret"></i></button>
			<button><svg><use href="#t-step"/></svg></button>
			<button><svg><use href="#t-list"/></svg></button>
			<button><svg><use href="#t-rect"/></svg></button><button class="drop"><i class="caret"></i></button>
			<button><svg><use href="#t-face"/></svg></button>
			<button><svg><use href="#t-cube"/></svg></button>
			<button class="on"><svg><use href="#t-snap"/></svg></button>
			<button class="on"><svg><use href="#t-end"/></svg></button>
			<button class="on"><svg><use href="#t-mid"/></svg></button>
			<button><svg><use href="#t-ctrl"/></svg></button>
			<button class="on"><svg><use href="#t-poly"/></svg></button>
			<button><svg><use href="#t-cross"/></svg></button>
			<button class="on"><svg><use href="#t-center"/></svg></button>
			<button><svg><use href="#t-quad"/></svg></button>
			<button class="on"><svg><use href="#t-plus"/></svg></button>
			<button class="on"><svg><use href="#t-curve"/></svg></button>
			<button><svg><use href="#t-surf"/></svg></button>
			<button><svg><use href="#t-grid"/></svg></button>
			<span class="rule"></span>
			<button><svg><use href="#t-fit"/></svg></button>
			<button><svg><use href="#t-pan"/></svg></button>
			<button><svg><use href="#t-rot"/></svg></button>
			<button><svg><use href="#t-layout"/></svg></button><button class="drop"><i class="caret"></i></button>
			<button><svg><use href="#t-clip"/></svg></button><button class="drop"><i class="caret"></i></button>
			<button><svg><use href="#t-shade"/></svg></button><button class="drop"><i class="caret"></i></button>
			<button><svg><use href="#t-view"/></svg></button><button class="drop"><i class="caret"></i></button>
			<span class="rule"></span>
		</div>
		<button class="launcher"><i class="caret"></i></button>
	</section>

	<main>
		<nav class="rail">
			<button class="gear"><svg><use href="#s-gear"/></svg></button>
			<button class="apart"><svg><use href="#s-asm"/></svg></button>
			<button><svg><use href="#s-con"/></svg></button>
			<button class="active"><svg><use href="#s-part"/></svg></button>
			<button><svg><use href="#s-books"/></svg></button>
			<button class="apart"><svg><use href="#s-info"/></svg></button>
			<button class="apart"><svg><use href="#s-web"/></svg></button>
			<button class="apart"><svg><use href="#s-clock"/></svg></button>
			<button><svg><use href="#s-role"/></svg></button>
			<button><svg><use href="#s-wiz"/></svg></button>
			<button><svg><use href="#s-robot"/></svg></button>
			<button><svg><use href="#s-card"/></svg></button>
			<button><svg><use href="#s-cards"/></svg></button>
			<button class="apart"><svg><use href="#s-star"/></svg></button>
		</nav>

		<aside class="panel">
			<header><h2>部件导航器</h2><button class="max" aria-label="最大化"></button></header>
			<div class="tree">
				<table>
					<thead>
						<tr><th>名称<i class="sort"></i></th><th class="layer">图层</th></tr>
					</thead>
					<tbody>
						<tr><td><div class="node"><svg class="line" viewBox="0 0 18 24"><path d="M9.500 24V12.500H18"/></svg><svg><use href="#s-clock"/></svg>历史记录模式</div></td><td></td></tr>
						<tr><td><div class="node"><svg class="line" viewBox="0 0 18 24"><path d="M9.500 0v24M15 12.500h3"/><path class="knob" d="M4.500 7.500h10v10h-10z"/><path class="sign" d="M6 12.500h7M9.500 9v7"/></svg><svg><use href="#n-view"/></svg>模型视图</div></td><td></td></tr>
						<tr><td><div class="node"><svg class="line" viewBox="0 0 18 24"><path d="M9.500 0v24M15 12.500h3"/><path class="knob" d="M4.500 7.500h10v10h-10z"/><path class="sign" d="M6 12.500h7M9.500 9v7"/></svg><svg class="tick"><use href="#n-tick"/></svg><svg><use href="#n-cam"/></svg>摄像机</div></td><td></td></tr>
						<tr><td><div class="node"><svg class="line" viewBox="0 0 18 24"><path d="M9.500 0v7M15 12.500h3"/><path class="knob" d="M4.500 7.500h10v10h-10z"/><path class="sign" d="M6 12.500h7"/></svg><svg><use href="#n-folder"/></svg>模型历史记录</div></td><td></td></tr>
						<tr class="strong"><td><label class="node"><svg class="line deep" viewBox="0 0 38 24"><path d="M28.500 0v12.500H38"/></svg><input type="checkbox" checked><svg><use href="#n-body"/></svg>体 (0)</label></td><td>1</td></tr>
						<tr><td></td><td></td></tr>
						<tr><td></td><td></td></tr>
						<tr><td></td><td></td></tr>
						<tr><td></td><td></td></tr>
						<tr><td></td><td></td></tr>
						<tr><td></td><td></td></tr>
						<tr><td></td><td></td></tr>
						<tr><td></td><td></td></tr>
						<tr><td></td><td></td></tr>
						<tr><td></td><td></td></tr>
						<tr><td></td><td></td></tr>
						<tr><td></td><td></td></tr>
						<tr><td></td><td></td></tr>
						<tr><td></td><td></td></tr>
						<tr><td></td><td></td></tr>
						<tr><td></td><td></td></tr>
						<tr><td></td><td></td></tr>
						<tr><td></td><td></td></tr>
						<tr><td></td><td></td></tr>
						<tr><td></td><td></td></tr>
						<tr><td></td><td></td></tr>
					</tbody>
				</table>
				<div class="hscroll">
					<button aria-label="左"><svg viewBox="0 0 8 10"><path d="M6 1L2 5l4 4"/></svg></button>
					<div class="track"><div class="thumb"></div></div>
					<button aria-label="右"><svg viewBox="0 0 8 10"><path d="M2 1l4 4-4 4"/></svg></button>
				</div>
			</div>
			<div class="splitter"></div>
			<button class="section">相依性<svg><use href="#n-down"/></svg></button>
			<button class="section">细节<svg><use href="#n-down"/></svg></button>
			<button class="section">预览<svg><use href="#n-down"/></svg></button>
		</aside>

		<section class="viewport">
			<svg class="scene" viewBox="480 203 1440 804">
				<defs>
					<linearGradient id="bore"><stop offset="0" stop-color="#746a92"/><stop offset=".35" stop-color="#635a7c"/><stop offset=".6" stop-color="#716789"/><stop offset="1" stop-color="#51496a"/></linearGradient>
					<linearGradient id="cyl" x2="0" y2="1"><stop offset="0" stop-color="#443d59"/><stop offset=".5" stop-color="#7f75a2"/><stop offset="1" stop-color="#a093cb"/></linearGradient>
					<linearGradient id="edgeL"><stop offset="0" stop-color="#585071"/><stop offset="1" stop-color="#686083"/></linearGradient>
					<linearGradient id="edgeR"><stop offset="0" stop-color="#6b6288"/><stop offset="1" stop-color="#655c7f"/></linearGradient>
					<g id="hole"><ellipse rx="14.500" ry="4" fill="#a093cb"/><ellipse cy="1" rx="12" ry="3" fill="#675e80" stroke="#383145" stroke-width=".6"/></g>
					<g id="pin"><ellipse rx="11" ry="3"/></g>
					<g id="well"><ellipse rx="50" ry="12" fill="#a093cb"/><ellipse cy="1.500" rx="48" ry="10" fill="url(#bore)"/></g>
				</defs>
				<g stroke="#383145" stroke-width="1" stroke-linejoin="round">
					<!-- side walls -->
					<path fill="#686083" d="M622 511L612 676l-1 146q2 8 16 11l46 11v-21l49 13v20q22 7 54 7l711 3q14 1 25-2l46-11v-20l52-10v20l32-7q15-3 17-10l12-162V515l-11-9-1028-4z"/>
					<path fill="#57506d" d="M627 686l109 26v147l-14-3v-20l-49-13v21l-46-11z"/>
					<path fill="url(#edgeL)" d="M612 676l-1 146q2 8 16 11V686q-12-3-15-10z"/>
					<path fill="url(#edgeL)" d="M736 712v147q20 4 40 4V716q-24 0-40-4z"/>
					<path fill="url(#edgeR)" d="M1487 718v148q22 0 41-5V715q-16 4-41 3z"/>
					<path fill="url(#edgeR)" d="M1641 689v147q15-3 18-10l-1-146q-5 7-17 9z"/>
					<path fill="#5c5475" d="M1671 515v149l-12 162-1-146z"/>
					<path fill="none" d="M1671 560l-8 100M1666 632l1-60"/>
					<!-- notches -->
					<path fill="#7c729d" stroke-width=".7" d="M673 823l49 13v6q-12-3-27-2l-21 4zM695 829v10M709 833v7"/>
					<path fill="#7c729d" stroke-width=".7" d="M1558 833l52-10v20l-22-5q-15-1-30 4zM1574 831v8M1588 828v10"/>
					<path fill="none" stroke="#2d2739" stroke-width="2" d="M627 833l46 11M722 856q22 7 54 7l711 3q14 1 25-2l46-11M1610 843l32-7"/>
					<!-- chamfers -->
					<path fill="#6d648a" d="M622 511l10-9-11 166-9 8z"/>
					<path fill="#8479a6" d="M621 668l12 7-6 11q-12-3-15-10z"/>
					<path fill="#8479a6" d="M633 675l110 26-7 11-109-26z"/>
					<path fill="#978bc0" d="M743 701q14 3 33 3v12q-24 0-40-4z"/>
					<path fill="#9f92cb" d="M776 704l711 2v12l-711-2z"/>
					<path fill="#a598d3" d="M1487 706q18 1 34-2l7 11q-16 4-41 3z"/>
					<path fill="#9a8dc4" d="M1521 704l113-26 7 11-113 26z"/>
					<path fill="#9186b6" d="M1634 678q12-3 15-8l9 10q-5 7-17 9z"/>
					<path fill="#786e96" d="M1660 506l11 9-13 165-9-10z"/>
					<!-- top face -->
					<path fill="#8e82b3" d="M632 503q2-4 9-6l122-28q10-3 33-3l721 3q10 0 16 2l119 30q7 2 8 6l-11 163q-3 5-15 8l-113 26q-16 3-34 2l-711-2q-19 0-33-3l-110-26q-10-2-12-7z"/>
					<!-- counterbored holes -->
					<g stroke-width=".8">
						<use href="#well" x="950" y="556"/><use href="#well" x="1138" y="623"/><use href="#well" x="1335" y="558"/>
						<use href="#hole" x="778" y="477"/><use href="#hole" x="1202" y="478"/><use href="#hole" x="964" y="530"/>
						<use href="#hole" x="1325" y="531"/><use href="#hole" x="672" y="573"/><use href="#hole" x="957" y="624"/>
						<use href="#hole" x="1345" y="625"/><use href="#hole" x="665" y="671"/><use href="#hole" x="1079" y="695"/>
						<use href="#hole" x="1616" y="503"/><use href="#hole" x="1609" y="597"/><use href="#hole" x="1503" y="696"/>
						<g fill="#6a6184">
							<use href="#pin" x="1572" y="491"/><use href="#pin" x="1633" y="516"/><use href="#pin" x="1632" y="541"/><use href="#pin" x="1629" y="575"/>
							<use href="#pin" x="1572" y="608"/><use href="#pin" x="1597" y="636"/><use href="#pin" x="1623" y="663"/><use href="#pin" x="1558" y="685"/>
						</g>
						<use href="#pin" x="1615" y="615" fill="#e070d8"/><use href="#pin" x="1553" y="642" fill="#e8604f"/>
					</g>
					<!-- bores in the walls -->
					<g fill="url(#cyl)" stroke-width=".8">
						<path fill="#8e83b0" d="M697 735c2-8 18-11 22-1 4 6 6 14 5 18-3 6-16 6-22-2-4-5-6-10-5-15z"/><ellipse cx="710" cy="739" rx="10" ry="11" fill="#8e83b0"/><path fill="none" d="M711 739l9-4M700 744q8 12 23 6"/>
						<ellipse cx="989" cy="822" rx="20" ry="14"/><path fill="#a093cb" d="M983 808q-13 3-14 13 1 9 8 12 10-8 6-25z"/><path fill="none" d="M979 834q9-9 6-26"/>
						<ellipse cx="1276" cy="822" rx="20" ry="14"/><path fill="#a093cb" d="M1282 809q13 4 14 13 0 8-8 12-11-8-6-25z"/><path fill="none" d="M1286 835q-11-9-7-26"/>
						<ellipse cx="1618" cy="731" rx="14" ry="15" transform="rotate(20 1618 731)"/><ellipse cx="1560" cy="812" rx="14" ry="15" transform="rotate(20 1560 812)"/>
					</g>
				</g>
				<!-- view triad -->
				<path d="M546 909h24v29h-24z" fill="#d2d3d4" stroke="#a5a6a8"/><path d="M546 915h24M546 934h24" stroke="#b0b1b3"/>
				<path d="M544 938v-30" stroke="#1239c4" stroke-width="3"/><path d="M541 909l3-11 3 11z" fill="#1239c4"/>
				<path d="M548 941h30" stroke="#c63a2b" stroke-width="2"/><path d="M576 938l11 3-11 3z" fill="#c63a2b"/>
				<circle cx="544" cy="941" r="4" fill="#b9b9bb"/><circle cx="543" cy="940" r="1.500" fill="#fff"/>
				<text x="540" y="898" fill="#2b49cf">Z</text><text x="589" y="946" fill="#cf4a3b">X</text>
				<!-- pick cursor -->
				<g fill="none"><path d="M1870 718h31M1885.500 703v31" stroke="#111" stroke-width="3"/><path d="M1871 718h29M1885.500 704v29" stroke="#fff"/><circle cx="1885.500" cy="718" r="11.500" stroke="#222" stroke-dasharray="13 5" stroke-dashoffset="-3"/></g>
			</svg>
			<p class="caption">正三轴测图 工作 摄像机 正三轴测图</p>
			<div class="ime">
				<svg class="logo"><use href="#w-s"/></svg>
				<button>中</button>
				<button><svg viewBox="0 0 20 20"><circle cx="5" cy="6" r="2" fill="none" stroke="#1468cf" stroke-width="1.500"/><path d="M12 9h4v4l-3 4h-1l1-4h-1z" fill="#1468cf"/></svg></button>
				<button><svg viewBox="0 0 20 20"><rect x="7" y="1" width="6" height="11" rx="3" fill="#1468cf"/><path d="M4 10c0 8 12 8 12 0M10 16v3M7 18h6" fill="none" stroke="#1468cf" stroke-width="1.500"/></svg></button>
				<button><svg viewBox="0 0 20 20"><rect x="1" y="3" width="18" height="14" rx="2" fill="none" stroke="#1468cf" stroke-width="2"/><path d="M4 8h12M4 11h12M7 5v8M11 5v8M14 5v8M5 14h10" stroke="#1468cf"/></svg></button>
				<button><svg viewBox="0 0 20 20"><path d="M1 5l5-3 3 2 4-2 5 4-3 4v8H5V9L2 9z" fill="#a978dd"/><path d="M1 5l5-3 3 2-4 5z" fill="#f5836a"/><circle cx="17" cy="2" r="3" fill="#f4592f"/></svg></button>
				<button><svg viewBox="0 0 20 20"><path d="M5 2h10l4 5v6l-3 3h-3l-1-2H8l-1 2H4l-3-3V7z" fill="#1468cf"/><path d="M5 8h4M7 6v4" stroke="#fff"/><circle cx="13" cy="8" r="1.500" fill="#fff"/><path d="M1 18h4M15 18h4" stroke="#1468cf" stroke-width="2"/></svg></button>
				<button><svg viewBox="0 0 20 20"><rect x="2" y="2" width="7" height="7" rx="2" fill="#1468cf"/><rect x="12" y="3" width="6" height="6" rx="2" fill="none" stroke="#1468cf" stroke-width="2"/><rect x="2" y="11" width="7" height="7" rx="2" fill="#1468cf"/><rect x="11" y="11" width="7" height="7" rx="2" fill="#1468cf"/></svg></button>
				<button><svg viewBox="0 0 20 20"><path d="M10 0l3 4h5l-1 5 2 4-3 2-2 4H6l-2-4-3-2 2-4-1-5h5z" fill="#1468cf"/><path d="M10 5c5 5 4 8 2 11M10 5c-5 5-4 8-2 11M10 10v8" fill="none" stroke="#fff" stroke-width="1.500"/></svg></button>
			</div>
		</section>
	</main>

	<p class="status">选择对象并使用 MB3，或者双击某一对象</p>

	<footer class="taskbar">
		<button class="start"><svg viewBox="0 0 20 20"><path d="M0 3l8-1v8H0zM9 2l11-2v10H9zM0 11h8v8l-8-1zM9 11h11v9L9 19z" fill="#fff"/></svg></button>
		<label class="search">
			<svg class="glass" viewBox="0 0 20 20"><circle cx="13" cy="7" r="6" fill="none" stroke="#222" stroke-width="1.500"/><path d="M9 12l-8 8" stroke="#222" stroke-width="1.500"/></svg>
			<input type="text" placeholder="搜索" aria-label="搜索">
			<svg class="fruit" viewBox="0 0 80 38"><path d="M7 2h5l1 5c3 10 10 17 24 19l2 5c-4 6-16 6-24 5C2 33-2 18 3 10l4-4z" fill="#f3b636"/><path d="M9 7c0 12 8 23 27 24M6 8c-3 12 2 22 16 27M13 8c3 10 12 17 22 20" fill="none" stroke="#cf8a1c"/><path d="M12 10c4 9 12 15 20 18" fill="none" stroke="#ffe07a" stroke-width="3"/><path d="M7 0h6v5H7z" fill="#6b4420"/><path d="M36 27l4 1-1 5-3 1z" fill="#5a3818"/><path d="M34 4l16 11" stroke="#a4a8b4" stroke-width="4" stroke-linecap="round"/><path d="M40 12h40c0 12-6 20-13 22v3H53v-3c-8-2-13-10-13-22z" fill="#4fb7c0"/><ellipse cx="60" cy="13" rx="20" ry="3" fill="#2a8891"/></svg>
		</label>
		<button class="app"><svg viewBox="0 0 24 24"><path d="M2 3v18M16 3v18M2 7h14M2 17h14" fill="none" stroke="#fff" stroke-width="1.500"/><path d="M20 3v4M20 13v8" stroke="#fff" stroke-width="1.500"/><path d="M19 8h3v3h-3z" fill="#fff"/></svg></button>
		<button class="app"><svg class="large" viewBox="0 0 30 30"><circle cx="15" cy="15" r="15" fill="#1a6fc0"/><path d="M1 11C4-3 28-4 30 13c0 7-6 8-11 6 4-4 0-9-5-9C7 8 3 10 1 11z" fill="#44c5b5"/><path d="M15 1c9-1 15 5 15 12 0 5-4 7-8 7-3-1-4-1-3-3 3-6-2-12-11-12z" fill="#58ca79"/><path d="M1 12c6-5 12-2 12 1-3 6 2 12 12 12-7 6-22 6-24-8z" fill="#1867b4"/><path d="M13 12c-4 7 2 14 13 12l2-4c-5 2-12 0-10-5z" fill="#0c3f78"/></svg></button>
		<button class="app current"><svg class="large" viewBox="0 0 30 30"><circle cx="16" cy="17" r="11" fill="#178fdc"/><circle cx="14" cy="13" r="6" fill="#6fd8ef"/><path d="M18 6c10-2 14 4 8 10S9 27 1 27" fill="none" stroke="#f1b43c" stroke-width="2.500"/><path d="M4 3l12-2-2 14z" fill="#d22f3b" stroke="#f5b6b6"/></svg></button>
		<button class="app open"><svg class="large" viewBox="0 0 30 30"><path d="M1 3h12v6H1z" fill="#e29a18"/><path d="M1 6h28v19H1z" fill="#fbd25c"/><path d="M6 26v-8q0-3 3-3h12q3 0 3 3v8h-5v-5h-8v5z" fill="#3f8fd2"/></svg></button>
		<div class="tray">
			<button class="qa"><svg class="large" viewBox="0 0 30 34"><circle cx="13" cy="16" r="13" fill="#1687c9" stroke="#fff" stroke-width="2"/><path d="M9 12c0-7 9-6 9-1 0 4-5 3-5 8" fill="none" stroke="#fff" stroke-width="3"/><circle cx="13" cy="23" r="2" fill="#fff"/><circle cx="23" cy="24" r="6" fill="#efa92c"/><path d="M23 20v1M23 23v5" stroke="#fff" stroke-width="2"/></svg></button>
			<button class="weather"><svg><use href="#w-umbrella"/></svg>明天下大雨</button>
			<button><svg viewBox="0 0 20 20"><path d="M2 14l8-8 8 8" fill="none" stroke="#fff" stroke-width="1.500"/></svg></button>
			<button><svg viewBox="0 0 20 20"><rect x="6" y="0" width="8" height="13" rx="1" fill="#fff"/><path d="M4 9v6h12V9M10 15v4M6 19h8" fill="none" stroke="#fff"/></svg></button>
			<button><svg viewBox="0 0 20 20"><path d="M6 3h13v11H3V8M10 14v4M6 18h9" fill="none" stroke="#fff"/><path d="M0 1h5v6H0zM2 3v2" fill="#1c1c1c" stroke="#fff"/></svg></button>
			<button><svg viewBox="0 0 20 20"><path d="M1 7h3l4-4v14l-4-4H1zM11 7q2 3 0 6M14 5q4 5 0 10M17 2q5 8 0 16" fill="none" stroke="#fff"/></svg></button>
			<button class="sogou"><svg><use href="#w-s"/></svg></button>
			<time><span>20:09</span><span>2024/4/21</span></time>
			<button class="notes"><svg viewBox="0 0 20 20"><path d="M0 1h20v15H8l-4 4v-4H0z" fill="#fff"/><path d="M4 5h12M4 8h12M4 11h8" stroke="#1c1c1c"/></svg><b>1</b></button>
		</div>
	</footer>
</body>
</html>
```
FILE: styles.css
```
* {
	box-sizing: border-box;
}

body {
	margin: 0;
	height: 100vh;
	display: flex;
	flex-direction: column;
	overflow: hidden;
	background-color: white;
	color: #222;
	font-family: "Open Sans", "Noto Sans CJK SC", sans-serif;
	font-size: 14px;
	line-height: 18px;
}

h1, h2, p {
	margin: 0;
	font-weight: normal;
}

button {
	display: flex;
	align-items: center;
	justify-content: center;
	padding: 0;
	border: none;
	background: none;
	color: inherit;
	font: inherit;
	white-space: nowrap;
}

svg {
	display: block;
	flex: none;
	width: 16px;
	height: 16px;
}

.sprite {
	display: none;
}

.caret {
	flex: none;
	border: 3px solid transparent;
	border-top: 4px solid #222;
	border-bottom: none;
}

.caret.up {
	border-top: none;
	border-bottom: 4px solid #222;
}

.caret.off {
	border-top-color: #aaa;
	border-bottom-color: #aaa;
}

.caret.bar::before {
	content: "";
	display: block;
	width: 8px;
	height: 1px;
	margin: -8px 0 0 -4px;
	background-color: #222;
}

/* title bar */
.titlebar {
	display: flex;
	align-items: center;
	height: 30px;
	padding: 0 10px 0 4px;
}

.nx {
	width: 42px;
	color: #8296a3;
	font-size: 24px;
	line-height: 30px;
}

.quick {
	display: flex;
}

.quick button {
	height: 26px;
	width: 24px;
	gap: 3px;
	font-size: 14px;
}

.quick .drop {
	width: 14px;
}

.quick .sep {
	width: 32px;
	border-left: 1px solid #ddd;
}

.quick .sep:nth-last-child(2) {
	width: auto;
	padding: 0 3px 0 6px;
}

.titlebar h1 {
	flex: 1;
	padding-right: 16px;
	font-size: 16px;
	color: #111;
	text-align: center;
}

.win {
	display: flex;
	align-items: center;
	gap: 13px;
	color: #444;
}

.brand {
	margin-right: 16px;
	color: #00848c;
	font-size: 16px;
}

/* tab strip */
.tabs {
	display: flex;
	height: 32px;
	background-color: #c5d5d6;
	font-size: 16px;
}

.tabs > button {
	padding: 0 13px;
}

.tabs .file {
	width: 92px;
	background-color: #568182;
	color: white;
}

.tabs .active {
	background-color: white;
	border-top: 1px solid #999;
	color: #2f80ab;
}

.tab_tools {
	display: flex;
	align-items: center;
	gap: 10px;
	margin-left: auto;
	padding-right: 10px;
	color: #111;
}

.find {
	display: flex;
	align-items: center;
	width: 156px;
	height: 24px;
	margin-right: 2px;
	padding: 0 4px 0 2px;
	border: 1px solid #9fa8a8;
	background-color: white;
}

input[type="text"] {
	flex: 1;
	min-width: 0;
	padding: 0;
	border: none;
	outline: none;
	background: none;
	font: inherit;
}

.find input {
	font-size: 14px;
}

.find input::placeholder {
	color: #aaa;
}

/* ribbon */
.ribbon {
	display: flex;
	height: 106px;
	padding: 4px 0 2px;
	border-bottom: 1px solid #d5d5d5;
}

.group {
	display: flex;
	flex-direction: column;
	justify-content: space-between;
	padding: 0 1px 0 8px;
	border-right: 1px solid #d5d5d5;
}

.group.last {
	padding: 0 3px 0 5px;
}

.tools {
	display: flex;
}

.gallery {
	display: grid;
	grid-auto-rows: 26px;
	padding: 0 3px 0 2px;
	border: 1px solid #d5d5d5;
}

.gallery.two {
	grid-template-columns: 83px 79px;
}

.gallery.after {
	margin-left: 6px;
}

.gallery.after + .scroll {
	margin-right: 5px;
}

.gallery button, .small button {
	justify-content: flex-start;
	gap: 4px;
}

.scroll {
	display: grid;
	grid-template-rows: repeat(3, 26px);
	width: 20px;
	padding-top: 1px;
}

.scroll + .big {
	margin-left: 6px;
}

.big {
	flex-direction: column;
	justify-content: flex-start;
	min-width: 40px;
	padding: 0 4px;
}

.big svg {
	width: 32px;
	height: 34px;
	margin-bottom: 5px;
}

.big.boxed svg {
	width: 38px;
	border: 1px solid #ececec;
	border-radius: 3px;
}

.big.wide {
	padding: 0 6px;
}

.big .caret {
	margin-top: 4px;
}

.big.more {
	margin-left: 4px;
}

.letter {
	width: 30px;
	height: 34px;
	margin-bottom: 5px;
	color: #3f8fdd;
	font: bold 40px/32px "Liberation Serif", serif;
}

.letter.light, .letter.dark {
	height: 30px;
	margin: 2px 0 7px;
	border-radius: 5px;
	background-color: #efefef;
	color: #444;
	font-size: 26px;
	line-height: 30px;
}

.letter.dark {
	background-color: #424242;
	color: white;
}

.small {
	display: grid;
	grid-template-rows: 24px 26px 26px;
	margin-left: 11px;
}

.group footer {
	display: flex;
	align-items: center;
	padding-right: 7px;
	color: #2f80ab;
}

.group footer span {
	flex: 1;
	text-align: center;
}

.launcher {
	margin-left: auto;
	padding: 0 5px 7px;
	align-items: flex-end;
}

.toolbar .launcher {
	align-self: flex-end;
}

/* selection toolbar */
.toolbar {
	display: flex;
	align-items: center;
	height: 36px;
	border-bottom: 1px solid #8c8c8c;
}

.menu {
	height: 28px;
	gap: 4px;
	padding: 0 6px 0 10px;
	border-right: 1px solid #ddd;
}

.pick {
	display: flex;
	align-items: center;
	margin-left: 8px;
}

.menu + .pick {
	margin-left: 14px;
}

.pick select {
	width: 168px;
	height: 24px;
	padding: 0 2px;
	border: 1px solid #999;
	border-radius: 0;
	appearance: none;
	background-color: white;
	color: inherit;
	font: inherit;
}

.pick + .pick select {
	width: 176px;
}

.pick .caret {
	margin-left: -15px;
	margin-right: 9px;
}

.icons {
	display: flex;
	gap: 3px;
	margin-left: 3px;
}

.icons button {
	width: 22px;
	height: 22px;
}

.icons .drop {
	width: 12px;
	margin-left: -3px;
}

.icons .on {
	background-color: #c5d5d6;
	outline: 1px solid #a8bcbd;
}

.rule {
	width: 1px;
	margin: 0 5px;
	background-color: #ddd;
}

/* work area */
main {
	display: flex;
	flex: 1;
	min-height: 0;
}

.rail {
	display: flex;
	flex-direction: column;
	width: 32px;
	background-color: #dcdcdc;
	border-right: 1px solid #aaa;
}

.rail button {
	height: 42px;
	padding-left: 4px;
}

.rail svg {
	width: 24px;
	height: 24px;
}

.rail .gear {
	height: 30px;
	padding: 0;
}

.rail .apart {
	margin-top: 12px;
}

.rail .active {
	height: 44px;
	margin: -1px -1px -1px 2px;
	padding-left: 1px;
	border: 1px solid #aaa;
	border-right: none;
	background-color: white;
}

.panel {
	display: flex;
	flex-direction: column;
	width: 447px;
	padding: 0 9px 6px 6px;
}

.panel header {
	display: flex;
	align-items: center;
	justify-content: space-between;
	height: 31px;
	padding: 0 6px 0 4px;
}

.panel h2 {
	font-size: 15px;
}

.max {
	width: 15px;
	height: 13px;
	border: 1px solid #222;
	border-top-width: 2px;
}

.tree {
	display: flex;
	flex-direction: column;
	flex: 1;
	min-height: 0;
	padding: 1px;
	border: 1px solid #d5d5d5;
	border-bottom: none;
}

table {
	width: 100%;
	border-collapse: collapse;
	table-layout: fixed;
	font-size: 15px;
}

th, td {
	height: 24px;
	padding: 0;
	border-bottom: 1px solid #e6e6e6;
}

th {
	padding-left: 6px;
	background-color: #eeeeee;
	border-bottom-color: #ccc;
	text-align: left;
	font-weight: normal;
}

td + td, .layer {
	width: 97px;
	padding-left: 5px;
	border-left: 1px solid #e0e0e0;
}

tbody tr:nth-child(even) {
	background-color: #f9f9f9;
}

.strong {
	font-weight: bold;
}

.sort {
	display: inline-block;
	margin: 0 0 3px 18px;
	border: 5px solid transparent;
	border-top: none;
	border-bottom-color: #222;
}

.node {
	display: flex;
	align-items: center;
	gap: 4px;
	height: 23px;
}

.node .line {
	width: 18px;
	height: 24px;
	margin-right: -4px;
	fill: none;
	stroke: #999;
	stroke-dasharray: 1 1;
}

.node .deep {
	width: 38px;
	margin-right: -2px;
}

.node .tick {
	margin-right: -4px;
}

.line .knob {
	fill: white;
	stroke: #ccc;
	stroke-dasharray: none;
}

.line .sign {
	stroke: #222;
	stroke-dasharray: none;
}

.node input {
	appearance: none;
	width: 12px;
	height: 12px;
	margin: 0 -2px 0 0;
	border: 1px solid #111;
}

.node input::before {
	content: "";
	display: block;
	width: 4px;
	height: 8px;
	margin: 0 3px;
	border: solid #1e9b3f;
	border-width: 0 2px 2px 0;
	rotate: 40deg;
}

.hscroll {
	display: flex;
	height: 20px;
	margin-top: auto;
	background-color: #eeeeee;
}

.hscroll button {
	width: 20px;
}

.hscroll svg {
	width: 8px;
	height: 12px;
	fill: none;
	stroke: #444;
	stroke-width: 2;
}

.track {
	flex: 1;
}

.thumb {
	width: 67%;
	height: 100%;
	background-color: #cccccc;
}

.splitter {
	height: 5px;
	border: 1px solid #aaa;
	background-color: #ddd;
}

.section {
	justify-content: space-between;
	height: 28px;
	padding: 2px 5px 0 7px;
	border-bottom: 2px solid #d0d0d0;
	color: #2f80ab;
	font-size: 18px;
}

.viewport {
	position: relative;
	flex: 1;
	min-width: 0;
	border: 1px solid #d0a578;
	background-image: linear-gradient(#afb0b1, #cacbcc 30%, #d8dadb 55%, #e4e6e7 80%, #e7e8e9);
}

.scene {
	width: 100%;
	height: 100%;
	font-size: 13px;
}

.caption {
	position: absolute;
	left: 6px;
	bottom: 2px;
	color: #e8a062;
	font-size: 13px;
}

/* floating input-method bar */
.ime {
	position: absolute;
	right: -1px;
	bottom: -24px;
	display: flex;
	align-items: center;
	height: 32px;
	border: 1px solid #c5c9d6;
	background-color: white;
	color: #1468cf;
	font-size: 18px;
	font-weight: bold;
}

.ime button {
	width: 30px;
}

.ime button svg {
	width: 20px;
	height: 20px;
}

.ime .logo {
	width: 38px;
	height: 38px;
	margin: -6px 2px 0 -20px;
}

.status {
	height: 23px;
	padding-left: 3px;
	font-weight: bold;
	line-height: 21px;
}

/* desktop taskbar */
.taskbar {
	display: flex;
	height: 50px;
	background-color: #1c1c1c;
	color: white;
}

.start {
	width: 60px;
}

.start svg, .tray svg, .glass {
	width: 20px;
	height: 20px;
}

.search {
	display: flex;
	align-items: center;
	gap: 15px;
	width: 360px;
	padding: 0 12px 0 15px;
	background-color: #f2f2f2;
	font-size: 19px;
}

.search input::placeholder {
	color: #333;
}

.fruit {
	width: 80px;
	height: 38px;
}

.app {
	width: 61px;
	margin-left: 1px;
	border-bottom: 3px solid transparent;
}

.app svg {
	width: 24px;
	height: 24px;
}

.app .large, .qa .large {
	width: 30px;
	height: 30px;
}

.current {
	background-color: #4a4a4a;
	border-color: #76b9ed;
}

.open {
	width: 52px;
	margin-left: 6px;
	border-color: #76b9ed;
}

.tray {
	display: flex;
	align-items: center;
	gap: 11px;
	margin-left: auto;
	padding-right: 31px;
}

.qa {
	margin-right: 98px;
}

.weather {
	gap: 10px;
	margin-right: 18px;
	font-size: 18px;
}

.tray .weather svg {
	width: 30px;
	height: 34px;
}

.sogou {
	margin: 0 7px 0 5px;
}

time {
	display: flex;
	flex-direction: column;
	align-items: center;
	gap: 5px;
	width: 80px;
	margin-right: 12px;
}

.notes {
	position: relative;
}

.notes b {
	position: absolute;
	left: 9px;
	top: 10px;
	width: 20px;
	border: 1px solid #999;
	border-radius: 10px;
	background-color: #333;
}
```
